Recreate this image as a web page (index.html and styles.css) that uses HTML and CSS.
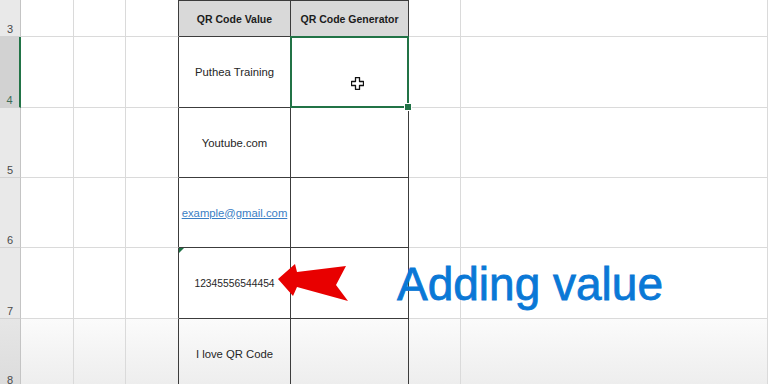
FILE: index.html
```html
<!DOCTYPE html>
<html>
<head>
<meta charset="utf-8">
<link rel="stylesheet" href="styles.css">
</head>
<body>
<div class="stage">
  <div class="sheet">
    <div class="rh">3</div>
    <div class="cell"></div><div class="cell"></div><div class="cell edge"></div>
    <div class="t hd">QR Code Value</div>
    <div class="t hd">QR Code Generator</div>
    <div class="cell"></div><div class="cell"></div>

    <div class="rh sel">4</div>
    <div class="cell"></div><div class="cell"></div><div class="cell edge"></div>
    <div class="t">Puthea Training</div>
    <div class="t active">
      <svg class="cursor" width="13" height="13" viewBox="0 0 13 13"><path d="M4.5 0.5h4v4h4v4h-4v4h-4v-4h-4v-4h4z" fill="#fff" stroke="#111" stroke-width="1.3" stroke-linejoin="round"/></svg>
    </div>
    <div class="cell"></div><div class="cell"></div>

    <div class="rh">5</div>
    <div class="cell"></div><div class="cell"></div><div class="cell edge"></div>
    <div class="t">Youtube.com</div>
    <div class="t"></div>
    <div class="cell"></div><div class="cell"></div>

    <div class="rh">6</div>
    <div class="cell"></div><div class="cell"></div><div class="cell edge"></div>
    <div class="t"><span class="link">example@gmail.com</span></div>
    <div class="t"></div>
    <div class="cell"></div><div class="cell"></div>

    <div class="rh">7</div>
    <div class="cell"></div><div class="cell"></div><div class="cell edge"></div>
    <div class="t num flag">12345556544454</div>
    <div class="t"></div>
    <div class="cell"></div><div class="cell"></div>

    <div class="rh fade last">8</div>
    <div class="cell fade"></div><div class="cell fade"></div><div class="cell edge fade"></div>
    <div class="t fade">I love QR Code</div>
    <div class="t fade"></div>
    <div class="cell fade"></div><div class="cell fade"></div>
  </div>

  <svg class="arrow" width="80" height="44" viewBox="0 0 80 44">
    <polygon points="2,17 19,2 21,10 70,4 60,23 72,39 21,25 17,34" fill="#e80000"/>
  </svg>
  <div class="caption">Adding value</div>
</div>
</body>
</html>
```

FILE: styles.css
```css
* { box-sizing: border-box; }
html, body { margin: 0; padding: 0; background: #fff; }
body { width: 768px; height: 384px; overflow: hidden; font-family: "Liberation Sans", Arial, sans-serif; }

.stage { position: relative; width: 768px; height: 384px; overflow: hidden; }

.sheet {
  display: grid;
  grid-template-columns: 21px 53px 52px 53px 112px 118px 52px 1fr;
  grid-template-rows: 37px 71px 70px 70px 71px 68px;
}

.cell {
  border-right: 1px solid #dadada;
  border-bottom: 1px solid #dadada;
}
.cell.edge { border-right-color: #3c3c3c; }

.rh {
  background: #e9e9e9;
  border-right: 1px solid #c4c4c4;
  border-bottom: 1px solid #d2d2d2;
  display: flex;
  align-items: flex-end;
  justify-content: center;
  font-size: 11px;
  color: #4a4a4a;
  padding-bottom: 1px;
}
.rh.sel { background: #d2d2d2; border-right: 2px solid #217346; color: #3d6b55; }
.rh.last { padding-bottom: 0; line-height: 11px; }

.t {
  border-right: 1px solid #3c3c3c;
  border-bottom: 1px solid #3c3c3c;
  display: flex;
  align-items: center;
  justify-content: center;
  font-size: 11.3px;
  color: #262626;
  position: relative;
}
.t.hd {
  background: #d9d9d9;
  font-weight: bold;
  font-size: 10.5px;
  color: #1c1c1c;
  border-top: 1px solid #3c3c3c;
}
.t.num { font-size: 10.3px; padding-top: 1px; }
.t.fade { padding-top: 3px; }
.link { color: #3a7ec4; text-decoration: underline; }

.t.flag::before {
  content: "";
  position: absolute;
  left: 0; top: 0;
  border-top: 5px solid #1e7145;
  border-right: 5px solid transparent;
}

.t.active::after {
  content: "";
  position: absolute;
  left: -1px; top: -1px; right: -1px; bottom: -1px;
  border: 2px solid #217346;
}
.t.active::before {
  content: "";
  position: absolute;
  right: -4px; bottom: -4px;
  width: 6px; height: 6px;
  background: #217346;
  border: 1px solid #fff;
  z-index: 2;
}
.cursor { position: absolute; left: 60px; top: 40px; }

.fade { background: linear-gradient(#fbfbfb, #ededed); }
.rh.fade { background: linear-gradient(#e6e6e6, #dcdcdc); }

.arrow { position: absolute; left: 276px; top: 262px; }

.caption {
  position: absolute;
  left: 397px;
  top: 261px;
  font-family: "Liberation Sans", Arial, sans-serif;
  font-size: 46px;
  line-height: 46px;
  color: #0a78d6;
  -webkit-text-stroke: 0.8px #0a78d6;
  white-space: nowrap;
}
```
